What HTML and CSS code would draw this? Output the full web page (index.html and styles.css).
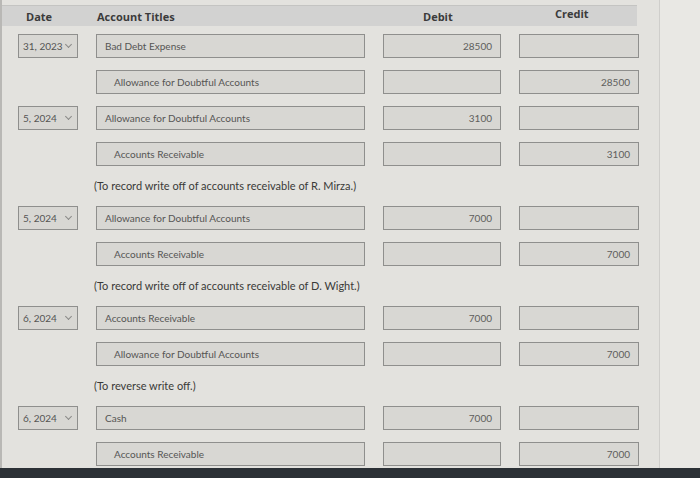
FILE: index.html
```html
<!DOCTYPE html>
<html>
<head>
<meta charset="utf-8">
<link rel="stylesheet" href="styles.css">
</head>
<body>
<div class="page">
  <div class="sheet">
    <div class="head">
      <span class="h-date">Date</span>
      <span class="h-acct">Account Titles</span>
      <span class="h-debit">Debit</span>
      <span class="h-credit">Credit</span>
    </div>
    <div class="rows">
      <div class="row">
        <div class="date">31, 2023<span class="chev"></span></div>
        <div class="box acct">Bad Debt Expense</div>
        <div class="box num">28500</div>
        <div class="box num"></div>
      </div>
      <div class="row">
        <div></div>
        <div class="box acct indent">Allowance for Doubtful Accounts</div>
        <div class="box num"></div>
        <div class="box num">28500</div>
      </div>
      <div class="row">
        <div class="date">5, 2024<span class="chev"></span></div>
        <div class="box acct">Allowance for Doubtful Accounts</div>
        <div class="box num">3100</div>
        <div class="box num"></div>
      </div>
      <div class="row">
        <div></div>
        <div class="box acct indent">Accounts Receivable</div>
        <div class="box num"></div>
        <div class="box num">3100</div>
      </div>
      <p class="note">(To record write off of accounts receivable of R. Mirza.)</p>
      <div class="row">
        <div class="date">5, 2024<span class="chev"></span></div>
        <div class="box acct">Allowance for Doubtful Accounts</div>
        <div class="box num">7000</div>
        <div class="box num"></div>
      </div>
      <div class="row">
        <div></div>
        <div class="box acct indent">Accounts Receivable</div>
        <div class="box num"></div>
        <div class="box num">7000</div>
      </div>
      <p class="note">(To record write off of accounts receivable of D. Wight.)</p>
      <div class="row">
        <div class="date">6, 2024<span class="chev"></span></div>
        <div class="box acct">Accounts Receivable</div>
        <div class="box num">7000</div>
        <div class="box num"></div>
      </div>
      <div class="row">
        <div></div>
        <div class="box acct indent">Allowance for Doubtful Accounts</div>
        <div class="box num"></div>
        <div class="box num">7000</div>
      </div>
      <p class="note">(To reverse write off.)</p>
      <div class="row">
        <div class="date">6, 2024<span class="chev"></span></div>
        <div class="box acct">Cash</div>
        <div class="box num">7000</div>
        <div class="box num"></div>
      </div>
      <div class="row">
        <div></div>
        <div class="box acct indent">Accounts Receivable</div>
        <div class="box num"></div>
        <div class="box num">7000</div>
      </div>
    </div>
  </div>
  <div class="aside"></div>
</div>
<div class="bezel"></div>
</body>
</html>
```

FILE: styles.css
```css
html, body {
  margin: 0;
  padding: 0;
}
body {
  width: 700px;
  height: 478px;
  overflow: hidden;
  background: #e4e3df;
  font-family: "Lato", "Open Sans", sans-serif;
}
.page {
  display: flex;
  height: 468px;
  overflow: hidden;
}
.sheet {
  width: 660px;
  flex: none;
  padding-top: 5px;
  border-left: 2px solid #b9b8b5;
  border-right: 1px solid #cfcecb;
  box-sizing: border-box;
  background: #e3e2de;
}
.aside {
  flex: 1;
  background: #e9e8e4;
}
.head {
  width: 635px;
  height: 21px;
  background: #d2d2d1;
  border-top: 1px solid #c4c4c2;
  box-sizing: border-box;
  display: grid;
  grid-template-columns: 60px 269px 118px 120px;
  column-gap: 18px;
  padding-left: 16px;
  align-items: center;
  font-family: "Open Sans", sans-serif;
  font-weight: 700;
  font-size: 11px;
  color: #3b3b3b;
}
.h-date { padding-left: 8px; }
.h-acct { padding-left: 1px; }
.h-debit { padding-left: 40px; }
.h-credit { padding-left: 36px; position: relative; top: -3px; }
.rows {
  display: flex;
  flex-direction: column;
  gap: 12px;
  padding-top: 8px;
  padding-left: 16px;
}
.row {
  display: grid;
  grid-template-columns: 60px 269px 118px 120px;
  column-gap: 18px;
  height: 24px;
}
.date, .box {
  box-sizing: border-box;
  border: 1px solid #8f8f8d;
  background: #d8d7d3;
  font-size: 10px;
  color: #555553;
  display: flex;
  align-items: center;
}
.date {
  padding-left: 4px;
  justify-content: space-between;
  padding-right: 6px;
}
.chev {
  width: 4px;
  height: 4px;
  border-right: 1px solid #8a8a88;
  border-bottom: 1px solid #8a8a88;
  transform: rotate(45deg);
  margin-top: -3px;
}
.acct {
  padding-left: 8px;
}
.acct.indent {
  padding-left: 17px;
}
.num {
  justify-content: flex-end;
  padding-right: 8px;
  color: #5e5e5c;
}
.note {
  margin: 0;
  height: 16px;
  line-height: 16px;
  padding-left: 76px;
  font-size: 11px;
  color: #3a3a38;
}
.bezel {
  height: 10px;
  background: #2c3136;
}
```
